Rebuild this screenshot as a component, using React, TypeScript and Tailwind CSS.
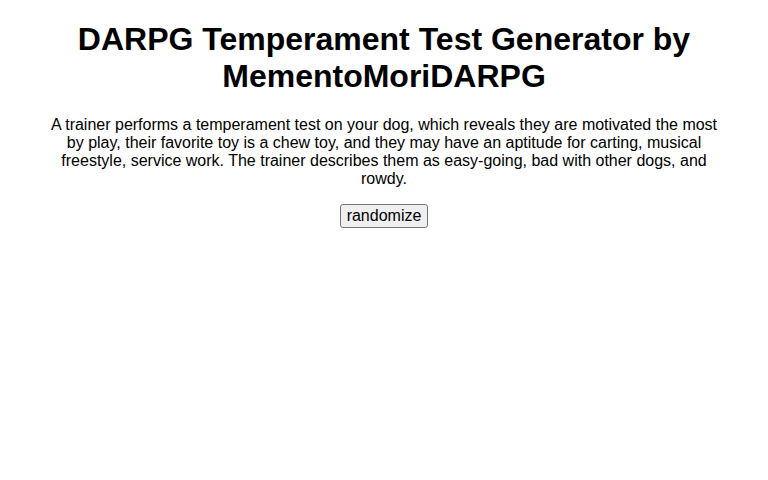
export default function App() {
  return (
    <div
      className="min-h-[480px] bg-white text-black text-center"
      style={{ fontFamily: '"Liberation Sans", Arial, sans-serif' }}
    >
      <div className="mx-auto max-w-[680px]">
        <h1 className="pt-[21px] text-[32px] font-bold leading-[37px]">
          DARPG Temperament Test Generator by MementoMoriDARPG
        </h1>
        <p className="mt-[21px] text-base leading-[18px]">
          A trainer performs a temperament test on your dog, which reveals they are motivated the
          most by play, their favorite toy is a chew toy, and they may have an aptitude for carting,
          musical freestyle, service work. The trainer describes them as easy-going, bad with other
          dogs, and rowdy.
        </p>
        <button
          type="button"
          className="mt-4 rounded-[3px] border border-[#767676] bg-[#efefef] px-[6px] py-[2px] text-base leading-[18px] text-black"
        >
          randomize
        </button>
      </div>
    </div>
  );
}
